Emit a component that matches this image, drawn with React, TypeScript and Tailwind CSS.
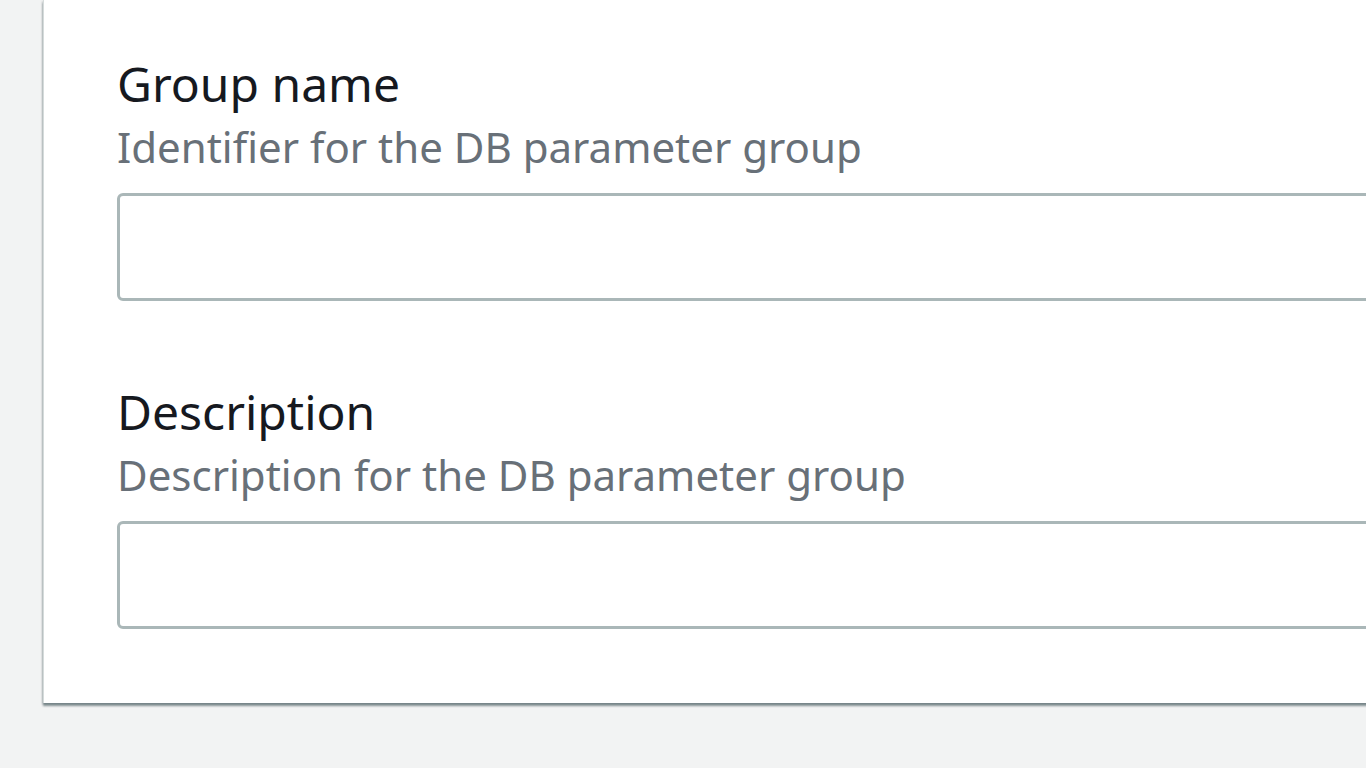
const fields = [
  { label: 'Group name', hint: 'Identifier for the DB parameter group' },
  { label: 'Description', hint: 'Description for the DB parameter group' },
]

const Field = ({ label, hint }: { label: string; hint: string }) => (
  <div className="flex flex-col">
    <label className="text-[48px] leading-[66px] text-[#16191f]">{label}</label>
    <p className="text-[42px] leading-[60px] text-[#687078]">{hint}</p>
    <input
      type="text"
      className="mt-4 h-[108px] w-[1400px] rounded-[6px] border-[3px] border-[#aab7b8] bg-white px-6 text-[42px] outline-none"
    />
  </div>
)

export default function App() {
  return (
    <div
      className="h-screen w-screen overflow-hidden bg-[#f2f3f3]"
      style={{ fontFamily: '"Noto Sans", "Open Sans", sans-serif' }}
    >
      <div className="ml-[43px] w-[1400px] border-l border-[#d5dbdb] bg-white pb-[74px] pl-[73px] pt-[51px] shadow-[0_3px_2px_0_rgba(0,28,36,0.45),-1px_1px_2px_0_rgba(0,28,36,0.15)]">
        <div className="flex flex-col gap-[78px]">
          {fields.map((f) => (
            <Field key={f.label} label={f.label} hint={f.hint} />
          ))}
        </div>
      </div>
    </div>
  )
}
